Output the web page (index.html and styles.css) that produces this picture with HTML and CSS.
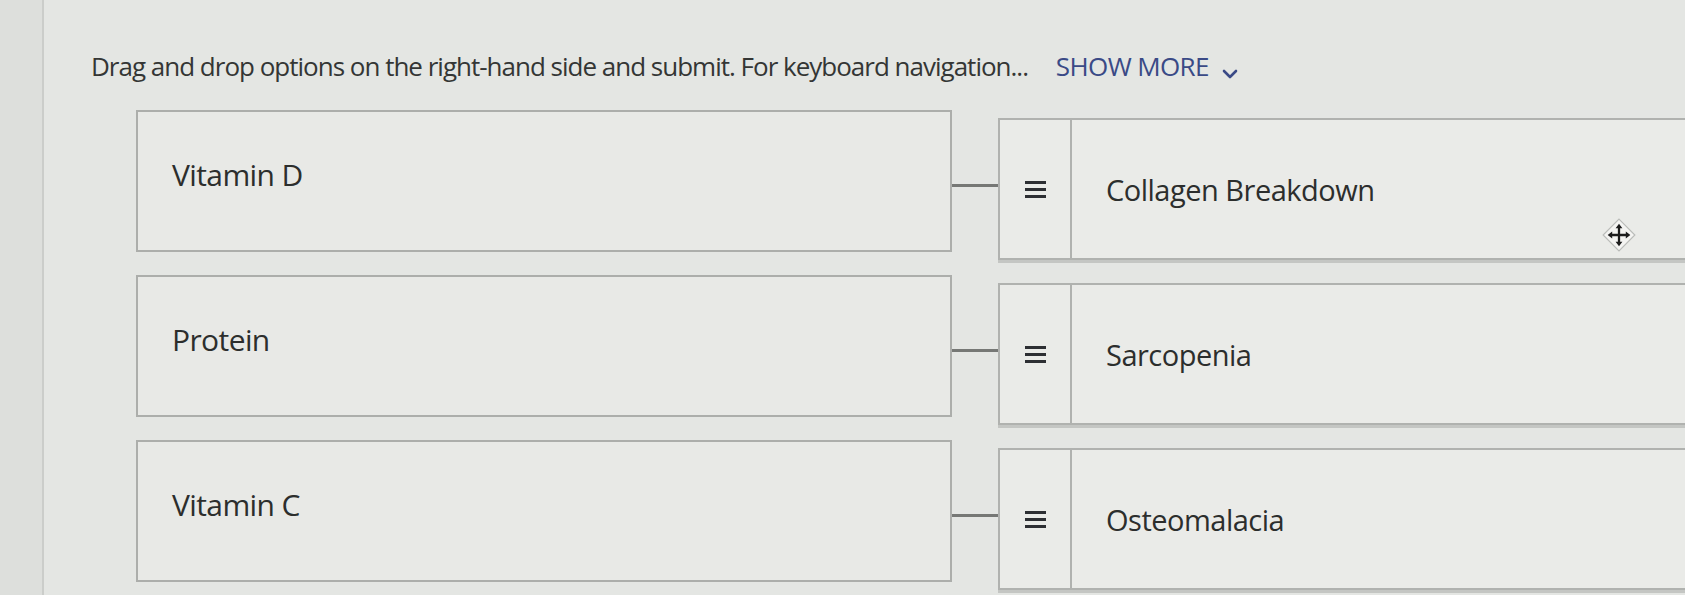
FILE: index.html
```html
<!DOCTYPE html>
<html lang="en">

<head>
    <meta charset="UTF-8">
    <meta name="viewport" content="width=device-width, initial-scale=1.0">
    <title>Matching Question</title>
    <link rel="stylesheet" href="styles.css">
</head>

<body>
    <div class="page">
        <div class="side"></div>
        <div class="main">
            <p class="instructions">
                Drag and drop options on the right-hand side and submit. For keyboard navigation...
                <a class="show-more" href="#">SHOW MORE
                    <svg class="chevron" viewBox="0 0 18 12" width="18" height="12">
                        <path d="M3 3 L9 9 L15 3" fill="none" stroke="#3a4a86" stroke-width="2.6" stroke-linecap="round" stroke-linejoin="round" />
                    </svg>
                </a>
            </p>
            <div class="rows">
                <div class="row">
                    <div class="prompt">Vitamin D</div>
                    <div class="connector"></div>
                    <div class="answer">
                        <div class="handle"><span class="bars"><i></i><i></i><i></i></span></div>
                        <div class="answer-text">Collagen Breakdown</div>
                        <svg class="cursor" viewBox="0 0 30 30" width="34" height="34">
                            <path d="M15 1 L29 15 L15 29 L1 15 Z" fill="#f4f4f2" stroke="#b9bbb8" stroke-width="1" />
                            <path d="M15 5 L18 9 H16 V14 H21 V12 L25 15 L21 18 V16 H16 V21 H18 L15 25 L12 21 H14 V16 H9 V18 L5 15 L9 12 V14 H14 V9 H12 Z" fill="#1d1d1d" />
                        </svg>
                    </div>
                </div>
                <div class="row">
                    <div class="prompt">Protein</div>
                    <div class="connector"></div>
                    <div class="answer">
                        <div class="handle"><span class="bars"><i></i><i></i><i></i></span></div>
                        <div class="answer-text">Sarcopenia</div>
                    </div>
                </div>
                <div class="row">
                    <div class="prompt">Vitamin C</div>
                    <div class="connector"></div>
                    <div class="answer">
                        <div class="handle"><span class="bars"><i></i><i></i><i></i></span></div>
                        <div class="answer-text">Osteomalacia</div>
                    </div>
                </div>
            </div>
        </div>
    </div>
</body>

</html>
```

FILE: styles.css
```css
body {
    margin: 0;
    font-family: 'Open Sans', 'Noto Sans', sans-serif;
    background-color: #e4e6e3;
    color: #2c2e2d;
    overflow: hidden;
}

.page {
    display: flex;
    height: 595px;
}

.side {
    width: 42px;
    flex-shrink: 0;
    background-color: #dddfdc;
    border-right: 2px solid #cbcdca;
}

.main {
    flex: 1;
    padding-left: 47px;
    min-width: 0;
}

.instructions {
    margin: 46px 0 0 0;
    font-size: 26px;
    letter-spacing: -1px;
    line-height: 40px;
    color: #343635;
    white-space: nowrap;
}

.show-more {
    margin-left: 22px;
    letter-spacing: -0.6px;
    color: #3a4a86;
    text-decoration: none;
}

.chevron {
    margin-left: 6px;
    vertical-align: -4px;
}

.rows {
    margin-top: 24px;
    margin-left: 45px;
    display: flex;
    flex-direction: column;
    gap: 23px;
}

.row {
    display: flex;
    align-items: flex-start;
    height: 142px;
}

.prompt {
    box-sizing: border-box;
    height: 142px;
    width: 816px;
    flex-shrink: 0;
    border: 2px solid #acaeab;
    background-color: #e8e9e6;
    padding: 0 0 14px 34px;
    display: flex;
    align-items: center;
    font-size: 30px;
    letter-spacing: -0.6px;
    color: #2c2e2d;
}

.connector {
    width: 46px;
    flex-shrink: 0;
    margin-top: 74px;
    height: 3px;
    background-color: #767875;
}

.answer {
    box-sizing: border-box;
    position: relative;
    width: 760px;
    height: 142px;
    flex-shrink: 0;
    display: flex;
    margin-top: 8px;
    border: 2px solid #b0b2af;
    background-color: #eaebe8;
    box-shadow: 0 3px 0 #c4c6c3;
}

.handle {
    width: 70px;
    flex-shrink: 0;
    border-right: 2px solid #b0b2af;
    display: flex;
    align-items: center;
    justify-content: center;
}

.bars {
    display: flex;
    flex-direction: column;
    gap: 4px;
}

.bars i {
    display: block;
    width: 21px;
    height: 3px;
    background-color: #2d2f33;
}

.answer-text {
    display: flex;
    align-items: center;
    padding-left: 34px;
    font-size: 29px;
    letter-spacing: -0.5px;
    color: #2c2e2d;
}

.cursor {
    position: absolute;
    left: 602px;
    top: 98px;
}
```
